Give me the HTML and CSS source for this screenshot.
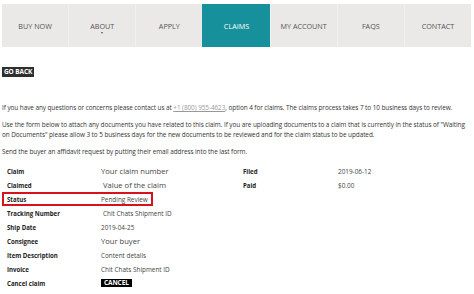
FILE: index.html
```html
<!DOCTYPE html>
<html lang="en">
<head>
<meta charset="utf-8">
<title>Claim</title>
<link rel="stylesheet" href="styles.css">
</head>
<body>
<nav class="nav">
  <a class="nav-item">BUY NOW</a>
  <a class="nav-item nav-drop">ABOUT<span class="caret"></span></a>
  <a class="nav-item">APPLY</a>
  <a class="nav-item active">CLAIMS</a>
  <a class="nav-item">MY ACCOUNT</a>
  <a class="nav-item">FAQS</a>
  <a class="nav-item">CONTACT</a>
</nav>
<div class="back-wrap"><button class="btn">GO BACK</button></div>
<div class="info">
  <p>If you have any questions or concerns please contact us at <a class="phone">+1 (800) 955-4623</a>, option 4 for claims. The claims process takes 7 to 10 business days to review.</p>
  <p>Use the form below to attach any documents you have related to this claim. If you are uploading documents to a claim that is currently in the status of "Waiting on Documents" please allow 3 to 5 business days for the new documents to be reviewed and for the claim status to be updated.</p>
  <p>Send the buyer an affidavit request by putting their email address into the last form.</p>
</div>
<div class="claim">
  <div class="row"><span class="label">Claim</span><span class="val big">Your claim number</span><span class="label2">Filed</span><span class="val">2019-06-12</span></div>
  <div class="row"><span class="label">Claimed</span><span class="val big shift">Value of the claim</span><span class="label2">Paid</span><span class="val">$0.00</span></div>
  <div class="row hl"><span class="label">Status</span><span class="val">Pending Review</span></div>
  <div class="row"><span class="label">Tracking Number</span><span class="val shift">Chit Chats Shipment ID</span></div>
  <div class="row"><span class="label">Ship Date</span><span class="val">2019-04-25</span></div>
  <div class="row"><span class="label">Consignee</span><span class="val big">Your buyer</span></div>
  <div class="row"><span class="label">Item Description</span><span class="val">Content details</span></div>
  <div class="row"><span class="label">Invoice</span><span class="val">Chit Chats Shipment ID</span></div>
  <div class="row"><span class="label">Cancel claim</span><span class="val"><button class="btn btn-black">CANCEL</button></span></div>
</div>
</body>
</html>
```
FILE: styles.css
```css
* { box-sizing: border-box; }
body {
  margin: 0;
  width: 474px;
  font-family: "Open Sans", "Noto Sans", sans-serif;
  color: #333;
  background: #fff;
}
.nav {
  display: flex;
  margin: 4px 3px 0 2px;
  height: 43px;
  background: #ebe8e8;
}
.nav-item {
  flex: 1;
  display: flex;
  align-items: center;
  justify-content: center;
  font-size: 7.2px;
  color: #555;
  border-left: 1px solid #f2f0f0;
  position: relative;
}
.nav-item:first-child { border-left: none; }
.nav-item.active {
  background: #16909b;
  color: #fff;
  border-left-color: #16909b;
}
.caret {
  position: absolute;
  left: 50%;
  top: 28px;
  margin-left: -1.5px;
  border-left: 1.5px solid transparent;
  border-right: 1.5px solid transparent;
  border-top: 2px solid #555;
}
.back-wrap {
  margin: 20px 0 0 2px;
  height: 10px;
}
.btn {
  font-family: "Open Sans", "Noto Sans", sans-serif;
  font-weight: 700;
  font-size: 6.5px;
  line-height: 8px;
  padding: 1px 2px;
  border: none;
  background: #2f2f2f;
  color: #fff;
  display: block;
  letter-spacing: -0.1px;
}
.btn-black { background: #000; padding: 0 3px; }
.info {
  margin-top: 26px;
  padding-left: 2px;
  font-size: 6.4px;
  letter-spacing: -0.06px;
  line-height: 10px;
  color: #333;
}
.info p { margin: 0 0 7px; }
.phone { color: #999; text-decoration: underline; }
.claim { margin-top: 2px; }
.row {
  display: flex;
  align-items: center;
  height: 14px;
  padding-left: 7px;
  font-size: 6.4px;
  color: #444;
}
.label {
  width: 94px;
  flex: none;
  font-weight: 700;
  color: #222;
  font-size: 6.1px;
}
.val { width: 142px; flex: none; }
.val.big { font-size: 7.6px; }
.val.shift { padding-left: 2px; }
.label2 {
  width: 95px;
  flex: none;
  font-weight: 700;
  color: #222;
  font-size: 6.1px;
}
.row.hl {
  width: 151px;
  margin-left: 2px;
  padding-left: 5px;
  outline: 2px solid #d6121c;
  outline-offset: -2px;
}
.row.hl .val { width: auto; }
```
